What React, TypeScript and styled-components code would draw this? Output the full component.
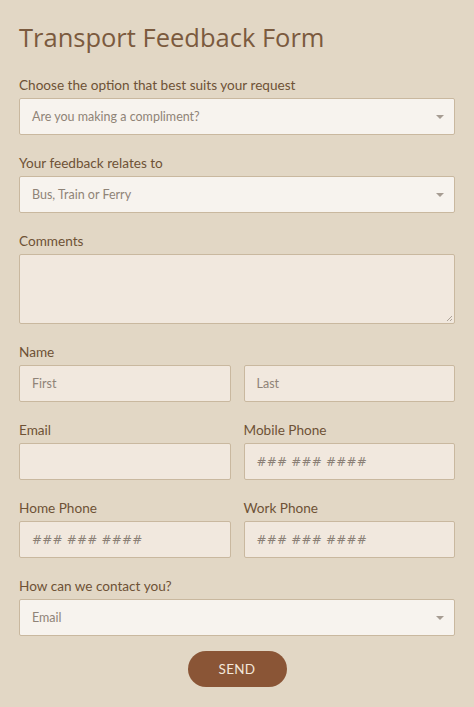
import React from "react";
import styled, { createGlobalStyle } from "styled-components";

const colors = {
  page: "#e2d7c5",
  brown: "#7b5a3e",
  label: "#6e5236",
  border: "#c9b89f",
  select: "#f7f3ee",
  input: "#f1e8de",
  placeholder: "#8f8377",
  button: "#8a5536",
  buttonText: "#f3e7da",
};

const GlobalStyle = createGlobalStyle`
  html, body {
    margin: 0;
    padding: 0;
    background: ${colors.page};
  }
  * {
    box-sizing: border-box;
  }
`;

const Page = styled.form`
  width: 474px;
  min-height: 707px;
  padding: 19px 19px 20px 19px;
  background: ${colors.page};
  font-family: "Lato", "Noto Sans", sans-serif;
`;

const Title = styled.h1`
  margin: 0 0 21px 0;
  font-family: "Open Sans", sans-serif;
  font-weight: 400;
  font-size: 25.5px;
  line-height: 36px;
  color: ${colors.brown};
`;

const Field = styled.div`
  display: flex;
  flex-direction: column;
  gap: 4px;
  margin-bottom: 19px;
`;

const Row = styled.div`
  display: grid;
  grid-template-columns: 1fr 1fr;
  column-gap: 13px;
`;

const Label = styled.label`
  font-size: 13.6px;
  line-height: 18px;
  color: ${colors.label};
`;

const Box = styled.div<{ $light?: boolean; $tall?: boolean }>`
  position: relative;
  height: ${(p) => (p.$tall ? "70px" : "37px")};
  display: flex;
  align-items: center;
  padding: 0 12px;
  border: 1px solid ${colors.border};
  border-radius: 2px;
  background: ${(p) => (p.$light ? colors.select : colors.input)};
  font-size: 12.5px;
  color: ${colors.placeholder};
`;

const Arrow = styled.span`
  position: absolute;
  right: 10px;
  top: 50%;
  margin-top: -2px;
  width: 0;
  height: 0;
  border-left: 4px solid transparent;
  border-right: 4px solid transparent;
  border-top: 4px solid #a69c92;
`;

const Grip = styled.svg`
  position: absolute;
  right: 1px;
  bottom: 1px;
`;

const Hash = styled.span`
  font-family: "DejaVu Sans", sans-serif;
  font-size: 12px;
  letter-spacing: 0.2px;
  color: #8a7f75;
`;

const Actions = styled.div`
  display: flex;
  justify-content: center;
  margin-top: -4px;
`;

const SendButton = styled.button`
  width: 99px;
  height: 36px;
  border: none;
  border-radius: 18px;
  background: ${colors.button};
  color: ${colors.buttonText};
  font-family: "Lato", "Noto Sans", sans-serif;
  font-size: 13.5px;
  letter-spacing: 0.3px;
`;

const Select = ({ value }: { value: string }) => (
  <Box $light>
    {value}
    <Arrow />
  </Box>
);

const App = () => {
  return (
    <>
      <GlobalStyle />
      <Page>
        <Title>Transport Feedback Form</Title>

        <Field>
          <Label>Choose the option that best suits your request</Label>
          <Select value="Are you making a compliment?" />
        </Field>

        <Field>
          <Label>Your feedback relates to</Label>
          <Select value="Bus, Train or Ferry" />
        </Field>

        <Field>
          <Label>Comments</Label>
          <Box $tall>
            <Grip width="7" height="7" viewBox="0 0 7 7">
              <path d="M6 1 L1 6 M6 4 L4 6" stroke="#9c9086" strokeWidth="0.8" />
            </Grip>
          </Box>
        </Field>

        <Field>
          <Label>Name</Label>
          <Row>
            <Box>First</Box>
            <Box>Last</Box>
          </Row>
        </Field>

        <Row>
          <Field>
            <Label>Email</Label>
            <Box />
          </Field>
          <Field>
            <Label>Mobile Phone</Label>
            <Box>
              <Hash>### ### ####</Hash>
            </Box>
          </Field>
        </Row>

        <Row>
          <Field>
            <Label>Home Phone</Label>
            <Box>
              <Hash>### ### ####</Hash>
            </Box>
          </Field>
          <Field>
            <Label>Work Phone</Label>
            <Box>
              <Hash>### ### ####</Hash>
            </Box>
          </Field>
        </Row>

        <Field>
          <Label>How can we contact you?</Label>
          <Select value="Email" />
        </Field>

        <Actions>
          <SendButton type="button">SEND</SendButton>
        </Actions>
      </Page>
    </>
  );
};

export default App;
